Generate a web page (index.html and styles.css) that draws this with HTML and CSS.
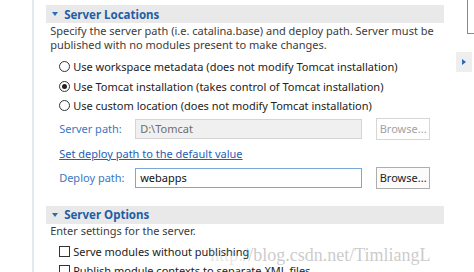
FILE: index.html
```html
<!DOCTYPE html>
<html lang="en">
<head>
    <meta charset="UTF-8">
    <title>Server Locations</title>
    <link rel="stylesheet" href="styles.css">
</head>
<body>
    <div class="page">
        <div class="gutter"></div>
        <div class="editor">
            <div class="section">
                <div class="section-title"><span class="twisty"></span>Server Locations</div>
                <p class="desc">Specify the server path (i.e. catalina.base) and deploy path. Server must be<br>published with no modules present to make changes.</p>
                <div class="options">
                    <label class="choice"><span class="radio"></span>Use workspace metadata (does not modify Tomcat installation)</label>
                    <label class="choice"><span class="radio checked"></span>Use Tomcat installation (takes control of Tomcat installation)</label>
                    <label class="choice"><span class="radio"></span>Use custom location (does not modify Tomcat installation)</label>
                </div>
                <div class="field-row">
                    <span class="field-label">Server path:</span>
                    <div class="text-input disabled">D:\Tomcat</div>
                    <button class="browse" disabled>Browse...</button>
                </div>
                <a class="link" href="#">Set deploy path to the default value</a>
                <div class="field-row">
                    <span class="field-label">Deploy path:</span>
                    <div class="text-input focused">webapps</div>
                    <button class="browse">Browse...</button>
                </div>
            </div>
            <div class="section">
                <div class="section-title"><span class="twisty"></span>Server Options</div>
                <p class="desc">Enter settings for the server.</p>
                <div class="options">
                    <label class="choice"><span class="check"></span>Serve modules without publishing</label>
                    <label class="choice"><span class="check"></span>Publish module contexts to separate XML files</label>
                </div>
            </div>
            <div class="watermark"><span class="faint">http:</span>//blog.csdn.net/TimliangL</div>
        </div>
        <div class="side">
            <div class="side-box"></div>
            <div class="side-tab"><span class="tab-arrow"></span></div>
        </div>
    </div>
</body>
</html>
```

FILE: styles.css
```css
body {
    margin: 0;
    background: #fff;
    font-family: "Noto Sans", "Open Sans", sans-serif;
    font-size: 11px;
    color: #3c3c3c;
    overflow: hidden;
}
.page {
    display: flex;
    height: 272px;
    overflow: hidden;
}
.gutter {
    width: 33px;
}
.editor {
    position: relative;
    width: 409px;
    padding: 5px 0 0 12px;
    border-left: 2px solid #e3e8ee;
}
.section-title {
    display: flex;
    align-items: center;
    height: 18px;
    background: #e9e9e9;
    color: #1f5ea5;
    font-weight: bold;
    font-size: 11.5px;
}
.twisty {
    width: 0;
    height: 0;
    margin: 0 6px 0 6px;
    border-left: 3.5px solid transparent;
    border-right: 3.5px solid transparent;
    border-top: 4px solid #2a6bb5;
}
.desc {
    margin: 0;
    padding: 1px 0 0 4px;
    line-height: 14px;
}
.options {
    padding: 5px 0 0 13px;
}
.choice {
    display: flex;
    align-items: center;
    height: 19.5px;
    color: #222;
}
.radio {
    width: 11px;
    height: 11px;
    margin-right: 3px;
    border: 1px solid #333;
    border-radius: 50%;
    box-sizing: border-box;
    display: flex;
    align-items: center;
    justify-content: center;
}
.radio.checked::after {
    content: "";
    width: 5px;
    height: 5px;
    border-radius: 50%;
    background: #222;
}
.check {
    width: 11px;
    height: 11px;
    margin-right: 3px;
    border: 1px solid #333;
    box-sizing: border-box;
}
.field-row {
    display: flex;
    align-items: center;
    padding-left: 13px;
    margin-top: 2px;
}
.field-label {
    width: 76px;
    color: #3a78c2;
}
.text-input {
    width: 227px;
    height: 20px;
    box-sizing: border-box;
    padding: 0 4px;
    line-height: 18px;
    border: 1px solid #7aa7da;
    color: #111;
}
.text-input.disabled {
    background: #f0f0f0;
    border-color: #d4d4d4;
    color: #6d6d6d;
}
.browse {
    margin-left: 14px;
    width: 54px;
    height: 22px;
    padding: 0;
    font: inherit;
    background: #fbfbfb;
    border: 1px solid #adadad;
    color: #222;
}
.browse:disabled {
    background: #fff;
    border-color: #d6d6d6;
    color: #a3a3a3;
}
.link {
    display: block;
    margin: 6px 0 5px 13px;
    color: #1f5eb3;
    line-height: 16px;
}
.section + .section {
    margin-top: 17px;
}
.section + .section .desc {
    padding-top: 0;
}
.section + .section .options {
    padding-top: 4px;
}
.watermark {
    position: absolute;
    left: 176px;
    top: 245px;
    font-family: "Liberation Serif", serif;
    font-size: 18px;
    color: rgba(150, 150, 150, 0.5);
}
.watermark .faint {
    color: rgba(170, 170, 170, 0.3);
}
.side {
    width: 18px;
    padding-left: 12px;
}
.side-box {
    margin-left: 11px;
    height: 33px;
    border-left: 1px solid #8a8a8a;
    border-bottom: 1px solid #8a8a8a;
}
.side-tab {
    margin-top: 18px;
    width: 16px;
    height: 20px;
    background: #eeeeee;
    display: flex;
    align-items: center;
    justify-content: center;
}
.tab-arrow {
    width: 0;
    height: 0;
    border-top: 3.5px solid transparent;
    border-bottom: 3.5px solid transparent;
    border-left: 4px solid #2a6bb5;
}
```
